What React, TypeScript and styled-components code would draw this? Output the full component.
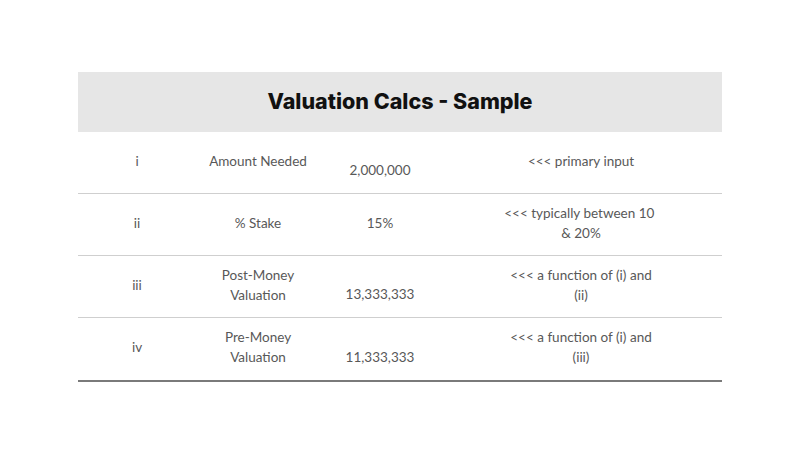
import React from "react";
import styled, { createGlobalStyle } from "styled-components";

const GlobalStyle = createGlobalStyle`
  html, body { margin: 0; padding: 0; background: #ffffff; }
  body { width: 800px; height: 450px; overflow: hidden; }
`;

const Page = styled.div`
  width: 800px;
  height: 450px;
  padding: 72px 78px 0;
  box-sizing: border-box;
`;

const Table = styled.div`
  width: 644px;
  display: grid;
  grid-template-columns: 118px 124px 120px 282px;
  border-bottom: 2px solid #7a7a7a;
`;

const Header = styled.div`
  grid-column: 1 / -1;
  height: 60px;
  padding-bottom: 2px;
  box-sizing: border-box;
  background: #e6e6e6;
  display: flex;
  align-items: center;
  justify-content: center;
  font-family: "Inter", "Open Sans", sans-serif;
  font-weight: 800;
  font-size: 21.5px;
  color: #111;
`;

type Align = "center" | "end";

const Cell = styled.div<{ $align?: Align; $last?: boolean }>`
  height: 62px;
  box-sizing: border-box;
  display: flex;
  align-items: ${(p) => (p.$align === "end" ? "flex-end" : "center")};
  justify-content: center;
  text-align: center;
  padding: ${(p) => (p.$align === "end" ? "0 4px 13px" : "0 4px 4px")};
  border-bottom: ${(p) => (p.$last ? "none" : "1px solid #cfcfcf")};
  font-family: "Lato", "Open Sans", sans-serif;
  font-size: 13.5px;
  line-height: 20px;
  color: #585858;
`;

const rows = [
  { num: "i", label: "Amount Needed", value: "2,000,000", valueAlign: "end" as Align, note: "<<< primary input" },
  { num: "ii", label: "% Stake", value: "15%", valueAlign: "center" as Align, note: "<<< typically between 10\u00a0\n& 20%" },
  { num: "iii", label: "Post-Money\nValuation", value: "13,333,333", valueAlign: "end" as Align, note: "<<< a function of (i) and\n(ii)" },
  { num: "iv", label: "Pre-Money\nValuation", value: "11,333,333", valueAlign: "end" as Align, note: "<<< a function of (i) and\n(iii)" },
];

const Lines = ({ text }: { text: string }) => (
  <span>
    {text.split("\n").map((t, i) => (
      <React.Fragment key={i}>
        {i > 0 && <br />}
        {t}
      </React.Fragment>
    ))}
  </span>
);

export default function App() {
  return (
    <Page>
      <GlobalStyle />
      <Table>
        <Header>Valuation Calcs - Sample</Header>
        {rows.map((r, i) => {
          const last = i === rows.length - 1;
          return (
            <React.Fragment key={r.num}>
              <Cell $last={last}>{r.num}</Cell>
              <Cell $last={last}><Lines text={r.label} /></Cell>
              <Cell $last={last} $align={r.valueAlign}>{r.value}</Cell>
              <Cell $last={last}><Lines text={r.note} /></Cell>
            </React.Fragment>
          );
        })}
      </Table>
    </Page>
  );
}
